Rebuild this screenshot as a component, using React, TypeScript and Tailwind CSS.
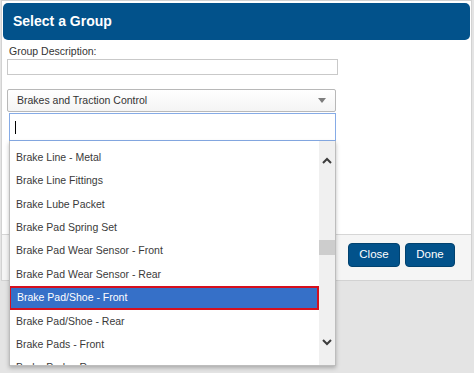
import React from "react";

const items = [
  "Brake Line - Metal",
  "Brake Line Fittings",
  "Brake Lube Packet",
  "Brake Pad Spring Set",
  "Brake Pad Wear Sensor - Front",
  "Brake Pad Wear Sensor - Rear",
  "Brake Pad/Shoe - Front",
  "Brake Pad/Shoe - Rear",
  "Brake Pads - Front",
  "Brake Pads - Rear",
];

const selected = "Brake Pad/Shoe - Front";

const Chevron = ({ up }: { up?: boolean }) => (
  <svg viewBox="0 0 10 7" className="mx-auto h-[7px] w-[10px]">
    <path
      d={up ? "M1 6 L5 2 L9 6" : "M1 1 L5 5 L9 1"}
      fill="none"
      stroke="#3c3c3c"
      strokeWidth="2"
    />
  </svg>
);

export default function App() {
  return (
    <div className="relative h-[373px] w-[474px] overflow-hidden bg-[#e4e4e4] font-['Liberation_Sans',Arial,sans-serif] text-[#333]">
      <div className="ml-[1px] flex h-[281px] w-[471px] flex-col border border-[#d2d2d2] bg-white">
        <div className="px-[1px] pt-[2px]">
          <div className="flex h-[37px] items-center rounded-[5px] bg-[#02528b] pl-[10px]">
            <h1 className="text-[14px] font-bold text-white">Select a Group</h1>
          </div>
        </div>

        <div className="px-[5px]">
          <label className="mt-[5px] block pl-[2px] text-[10.5px] leading-[13px] text-[#333]">
            Group Description:
          </label>
          <div className="mt-[1px] h-[16px] w-[331px] border border-[#c9c9c9] bg-white" />
          <div className="mt-[14px] flex h-[23px] w-[329px] items-center justify-between rounded-[2px] border border-[#b8b8b8] bg-gradient-to-b from-white to-[#f4f4f4] pl-[9px] pr-[9px]">
            <span className="text-[10.5px] text-[#333]">Brakes and Traction Control</span>
            <svg viewBox="0 0 8 5" className="h-[5px] w-[8px]">
              <path d="M0 0 L8 0 L4 5 Z" fill="#7d7d7d" />
            </svg>
          </div>
        </div>

        <div className="mt-auto flex h-[46px] items-start justify-end gap-[5px] border-t border-[#d6d6d6] bg-[#f5f5f5] pr-[16px] pt-[8px]">
          <button className="h-[24px] w-[52px] rounded-[4px] border border-[#01426f] bg-[#02528b] text-[11.5px] text-white">
            Close
          </button>
          <button className="h-[24px] w-[50px] rounded-[4px] border border-[#01426f] bg-[#02528b] text-[11.5px] text-white">
            Done
          </button>
        </div>
      </div>

      <div className="absolute left-[9px] top-[113px] w-[327px]">
        <div className="flex h-[28px] items-center border border-[#86abe6] bg-white pl-[5px]">
          <span className="h-[13px] w-[1px] bg-black" />
        </div>
        <div className="flex h-[225px] border-x border-b border-[#bdbdbd] bg-white shadow-[0_2px_4px_rgba(0,0,0,0.25)]">
          <ul className="flex-1 overflow-hidden pt-[5px]">
            {items.map((item) =>
              item === selected ? (
                <li
                  key={item}
                  className="-ml-[1px] flex h-[23.4px] items-center border-2 border-[#d6101e] bg-[#3670c8] pl-[6px] text-[10.5px] text-white"
                >
                  {item}
                </li>
              ) : (
                <li
                  key={item}
                  className="flex h-[23.4px] items-center pl-[6px] text-[10.5px] text-[#3a3a3a]"
                >
                  {item}
                </li>
              )
            )}
          </ul>
          <div className="flex w-[16px] flex-col bg-[#f0f0f0]">
            <div className="mt-[16px]">
              <Chevron up />
            </div>
            <div className="mt-[76px] h-[15px] bg-[#cdcdcd]" />
            <div className="mt-[84px]">
              <Chevron />
            </div>
          </div>
        </div>
      </div>
    </div>
  );
}
